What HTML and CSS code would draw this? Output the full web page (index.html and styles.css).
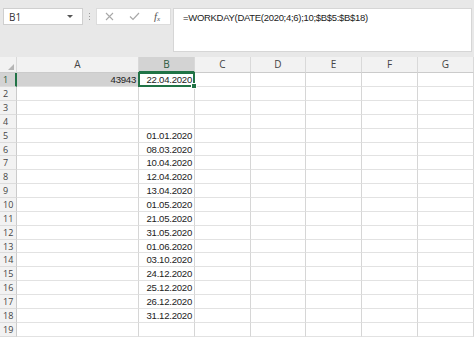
FILE: index.html
```html
<!DOCTYPE html>
<html lang="en">
<head>
  <meta charset="utf-8">
  <title>Book1 - Excel</title>
  <link rel="stylesheet" href="styles.css">
</head>
<body>
  <div class="toolbar">
    <div class="name-box">
      <span>B1</span>
      <span class="caret"></span>
    </div>
    <div class="grip"><i></i><i></i><i></i></div>
    <div class="fx-buttons">
      <svg class="btn-x" width="9" height="9" viewBox="0 0 9 9"><path d="M1 1L8 8M8 1L1 8" stroke="#a8a8a8" stroke-width="1.1" fill="none"/></svg>
      <svg class="btn-ok" width="11" height="9" viewBox="0 0 11 9"><path d="M1 4.5L4 7.5L10 1" stroke="#a8a8a8" stroke-width="1.2" fill="none"/></svg>
      <span class="fx">f<sub>x</sub></span>
    </div>
    <div class="formula">=WORKDAY(DATE(2020;4;6);10;$B$5:$B$18)</div>
  </div>

  <div class="sheet">
    <div class="row head">
      <div class="corner"><span class="tri"></span></div>
      <div>A</div><div class="sel">B</div><div>C</div><div>D</div><div>E</div><div>F</div><div>G</div>
    </div>
    <div class="row">
      <div class="num sel">1</div>
      <div class="cell shade">43943</div><div class="cell active">22.04.2020</div><div class="cell"></div><div class="cell"></div><div class="cell"></div><div class="cell"></div><div class="cell"></div>
    </div>
    <div class="row"><div class="num">2</div><div class="cell"></div><div class="cell"></div><div class="cell"></div><div class="cell"></div><div class="cell"></div><div class="cell"></div><div class="cell"></div></div>
    <div class="row"><div class="num">3</div><div class="cell"></div><div class="cell"></div><div class="cell"></div><div class="cell"></div><div class="cell"></div><div class="cell"></div><div class="cell"></div></div>
    <div class="row"><div class="num">4</div><div class="cell"></div><div class="cell"></div><div class="cell"></div><div class="cell"></div><div class="cell"></div><div class="cell"></div><div class="cell"></div></div>
    <div class="row"><div class="num">5</div><div class="cell"></div><div class="cell">01.01.2020</div><div class="cell"></div><div class="cell"></div><div class="cell"></div><div class="cell"></div><div class="cell"></div></div>
    <div class="row short"><div class="num">6</div><div class="cell"></div><div class="cell">08.03.2020</div><div class="cell"></div><div class="cell"></div><div class="cell"></div><div class="cell"></div><div class="cell"></div></div>
    <div class="row"><div class="num">7</div><div class="cell"></div><div class="cell">10.04.2020</div><div class="cell"></div><div class="cell"></div><div class="cell"></div><div class="cell"></div><div class="cell"></div></div>
    <div class="row"><div class="num">8</div><div class="cell"></div><div class="cell">12.04.2020</div><div class="cell"></div><div class="cell"></div><div class="cell"></div><div class="cell"></div><div class="cell"></div></div>
    <div class="row"><div class="num">9</div><div class="cell"></div><div class="cell">13.04.2020</div><div class="cell"></div><div class="cell"></div><div class="cell"></div><div class="cell"></div><div class="cell"></div></div>
    <div class="row"><div class="num">10</div><div class="cell"></div><div class="cell">01.05.2020</div><div class="cell"></div><div class="cell"></div><div class="cell"></div><div class="cell"></div><div class="cell"></div></div>
    <div class="row"><div class="num">11</div><div class="cell"></div><div class="cell">21.05.2020</div><div class="cell"></div><div class="cell"></div><div class="cell"></div><div class="cell"></div><div class="cell"></div></div>
    <div class="row"><div class="num">12</div><div class="cell"></div><div class="cell">31.05.2020</div><div class="cell"></div><div class="cell"></div><div class="cell"></div><div class="cell"></div><div class="cell"></div></div>
    <div class="row short"><div class="num">13</div><div class="cell"></div><div class="cell">01.06.2020</div><div class="cell"></div><div class="cell"></div><div class="cell"></div><div class="cell"></div><div class="cell"></div></div>
    <div class="row"><div class="num">14</div><div class="cell"></div><div class="cell">03.10.2020</div><div class="cell"></div><div class="cell"></div><div class="cell"></div><div class="cell"></div><div class="cell"></div></div>
    <div class="row"><div class="num">15</div><div class="cell"></div><div class="cell">24.12.2020</div><div class="cell"></div><div class="cell"></div><div class="cell"></div><div class="cell"></div><div class="cell"></div></div>
    <div class="row"><div class="num">16</div><div class="cell"></div><div class="cell">25.12.2020</div><div class="cell"></div><div class="cell"></div><div class="cell"></div><div class="cell"></div><div class="cell"></div></div>
    <div class="row"><div class="num">17</div><div class="cell"></div><div class="cell">26.12.2020</div><div class="cell"></div><div class="cell"></div><div class="cell"></div><div class="cell"></div><div class="cell"></div></div>
    <div class="row"><div class="num">18</div><div class="cell"></div><div class="cell">31.12.2020</div><div class="cell"></div><div class="cell"></div><div class="cell"></div><div class="cell"></div><div class="cell"></div></div>
    <div class="row"><div class="num">19</div><div class="cell"></div><div class="cell"></div><div class="cell"></div><div class="cell"></div><div class="cell"></div><div class="cell"></div><div class="cell"></div></div>
  </div>
</body>
</html>
```

FILE: styles.css
```css
body {
  margin: 0;
  font-family: "Liberation Sans", Arial, sans-serif;
  color: #222;
  background-color: #fff;
  overflow: hidden;
}

.toolbar {
  display: flex;
  align-items: flex-start;
  height: 57px;
  padding: 8px 0 0 3px;
  box-sizing: border-box;
  background-color: #e8e8e8;
}

.name-box {
  display: flex;
  align-items: center;
  justify-content: space-between;
  width: 80px;
  height: 17px;
  padding: 0 9px 0 5px;
  box-sizing: border-box;
  background-color: #fff;
  border: 1px solid #cfcfcf;
  font-family: "Open Sans", sans-serif;
  font-size: 10px;
  color: #333;
}

.caret {
  width: 0;
  height: 0;
  border-left: 3px solid transparent;
  border-right: 3px solid transparent;
  border-top: 3px solid #555;
}

.grip {
  display: flex;
  flex-direction: column;
  align-items: center;
  gap: 2px;
  width: 13px;
  padding-top: 5px;
}

.grip i {
  display: block;
  width: 1px;
  height: 1px;
  background-color: #9a9a9a;
}

.fx-buttons {
  display: flex;
  align-items: center;
  width: 75px;
  height: 17px;
  padding-left: 8px;
  box-sizing: border-box;
  background-color: #fff;
  border: 1px solid #dcdcdc;
}

.btn-x {
  margin-right: 15px;
}

.btn-ok {
  margin-right: 14px;
}

.fx {
  font-family: "Liberation Serif", serif;
  font-style: italic;
  font-size: 11px;
  color: #555;
  line-height: 1;
}

.fx sub {
  font-size: 7px;
  vertical-align: -1px;
}

.formula {
  flex: 1;
  height: 44px;
  margin: 0 2px 0 2px;
  padding: 3px 0 0 9px;
  box-sizing: border-box;
  background-color: #fff;
  border: 1px solid #d6d6d6;
  font-family: "Liberation Sans", sans-serif;
  font-size: 9.5px;
  letter-spacing: -0.3px;
  color: #222;
}

.sheet {
  background-color: #fff;
}

.row {
  display: grid;
  grid-template-columns: 17px 122px 56px 56px 55px 56px 56px 56px;
  height: 14px;
}

.row.short {
  height: 13px;
}

.row > div {
  box-sizing: border-box;
  border-right: 1px solid #d6d6d6;
  border-bottom: 1px solid #e2e2e2;
  font-size: 10px;
  line-height: 13px;
  white-space: nowrap;
  overflow: hidden;
}

.head {
  height: 16px;
}

.head > div {
  background-color: #f2f2f2;
  border-right: 1px solid #d9d9d9;
  border-bottom: 1px solid #cbcbcb;
  text-align: center;
  font-family: "Open Sans", sans-serif;
  font-size: 10px;
  line-height: 15px;
  color: #444;
}

.head > div.sel {
  background-color: #d3d3d3;
  border-bottom: 2px solid #217346;
  color: #2a5a3c;
}

.corner {
  position: relative;
}

.tri {
  position: absolute;
  right: 2px;
  bottom: 2px;
  width: 0;
  height: 0;
  border-left: 6px solid transparent;
  border-bottom: 6px solid #b5b5b5;
}

.row > .num {
  background-color: #f2f2f2;
  border-right: 1px solid #cbcbcb;
  border-bottom: 1px solid #dcdcdc;
  padding-left: 3px;
  font-family: "Open Sans", sans-serif;
  font-size: 9px;
  color: #444;
}

.row > .num.sel {
  background-color: #d3d3d3;
  border-right: 2px solid #217346;
  color: #2a5a3c;
}

.cell {
  text-align: right;
  padding-right: 2px;
  color: #222;
}

.row > .cell {
  font-size: 9.6px;
  letter-spacing: -0.25px;
}

.cell.shade {
  background-color: #d2d2d2;
}

.cell.active {
  position: relative;
  overflow: visible;
}

.cell.active::after {
  content: "";
  position: absolute;
  left: -1px;
  top: -1px;
  right: -1px;
  bottom: -1px;
  border: 2px solid #217346;
}

.cell.active::before {
  content: "";
  position: absolute;
  right: -3px;
  bottom: -3px;
  width: 4px;
  height: 4px;
  background-color: #217346;
  border: 1px solid #fff;
  z-index: 1;
}
```
